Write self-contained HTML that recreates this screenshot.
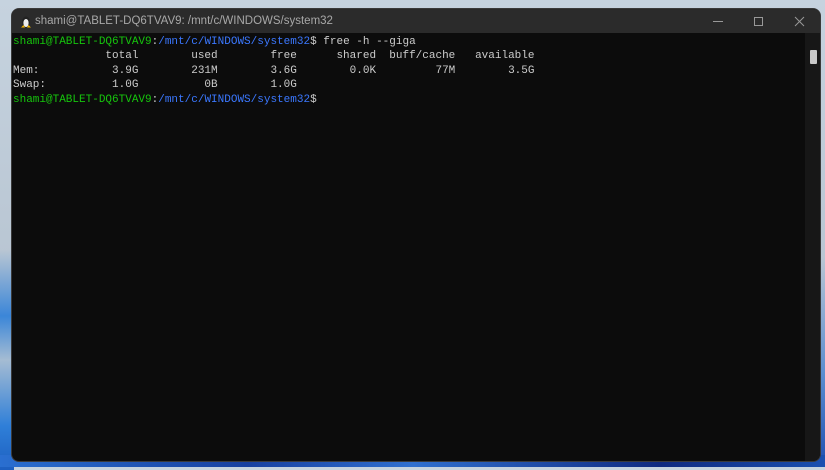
<!DOCTYPE html>
<html><head><style>
body{margin:0;width:825px;height:467px;overflow:hidden;position:relative;
background:linear-gradient(180deg,#c6d3df 0%,#b9c6d3 55%,#5a8ed0 80%,#1f4fb0 100%);}
.bl{position:absolute;left:0;top:250px;width:14px;height:220px;background:linear-gradient(180deg,#b9c6d3,#3b86d8 30%,#a5bcd3 50%,#2f7fd8 80%,#1d5fc0);}
.bot{position:absolute;left:0;top:455px;width:825px;height:12px;background:linear-gradient(90deg,#2a6fd0,#1840a0 30%,#3070d0 50%,#102a80 80%,#1a50b0);}
.win{position:absolute;left:12px;top:9px;width:808px;height:452px;background:#0c0c0c;border-radius:7px;overflow:hidden;box-shadow:0 0 0 1px #3a3a3a;}
.tb{height:24px;background:#2b2b2b;color:#a8a8a8;font:11.5px "Liberation Sans",sans-serif;line-height:24px;position:relative;}
.tb .t{position:absolute;left:23px;top:0}
.term{position:absolute;left:1px;top:26px;font:11px/14.4px "Liberation Mono",monospace;color:#cccccc;white-space:pre;}
.g{color:#16c60c}.b{color:#3b78ff}
.sb{position:absolute;right:0;top:24px;width:15px;bottom:0;background:#171717}
.th{position:absolute;right:3px;top:17px;width:7px;height:14px;background:#c8c8c8;border-radius:1px}
</style></head><body>
<div class="bl"></div><div class="bot"></div>
<div class="win">
<div class="tb">
<svg style="position:absolute;left:8px;top:6px" width="12" height="13" viewBox="0 0 12 13"><ellipse cx="6" cy="7" rx="4" ry="5.5" fill="#222"/><ellipse cx="6" cy="8" rx="2.6" ry="4" fill="#eee"/><path d="M1 12.5L3.5 10 5 12.5ZM11 12.5L8.5 10 7 12.5Z" fill="#f2b400"/></svg>
<span class="t">shami@TABLET-DQ6TVAV9: /mnt/c/WINDOWS/system32</span>
<svg style="position:absolute;left:700px;top:7px" width="100" height="11"><line x1="1" y1="5.5" x2="11" y2="5.5" stroke="#999"/><rect x="42.5" y="1.5" width="8" height="8" fill="none" stroke="#999"/><path d="M83 1L92 10M92 1L83 10" stroke="#999"/></svg>
</div>
<div class="sb"><div class="th"></div></div>
<div class="term"><span class="g">shami@TABLET-DQ6TVAV9</span>:<span class="b">/mnt/c/WINDOWS/system32</span>$ free -h --giga
              total        used        free      shared  buff/cache   available
Mem:           3.9G        231M        3.6G        0.0K         77M        3.5G
Swap:          1.0G          0B        1.0G
<span class="g">shami@TABLET-DQ6TVAV9</span>:<span class="b">/mnt/c/WINDOWS/system32</span>$</div>
</div>
</body></html>
